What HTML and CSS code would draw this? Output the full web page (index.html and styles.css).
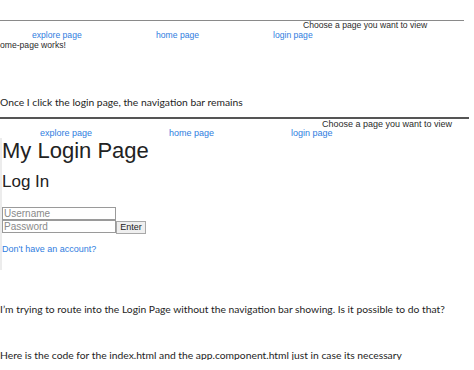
FILE: index.html
```html
<!DOCTYPE html>
<html>
  <head>
    <meta name="viewport" content="width=device-width,initial-scale=1.0" />
    <title>Login route question</title>
    <link rel="stylesheet" href="styles.css">
  </head>
  <body>
    <div class="shot shot-home">
      <div class="rule"></div>
      <div class="choose">Choose a page you want to view</div>
      <nav class="nav">
        <a class="nav-link" href="#">explore page</a>
        <a class="nav-link" href="#">home page</a>
        <a class="nav-link" href="#">login page</a>
      </nav>
      <p class="works">ome-page works!</p>
    </div>

    <p class="doc doc-once">Once I click the login page, the navigation bar remains</p>

    <div class="shot shot-login">
      <div class="rule"></div>
      <div class="choose">Choose a page you want to view</div>
      <nav class="nav">
        <a class="nav-link" href="#">explore page</a>
        <a class="nav-link" href="#">home page</a>
        <a class="nav-link" href="#">login page</a>
      </nav>
      <div class="login">
        <h1 class="login-title">My Login Page</h1>
        <h2 class="login-sub">Log In</h2>
        <form class="login-form" action="">
          <div class="row"><input class="field" placeholder="Username" /></div>
          <div class="row"><input class="field" type="password" placeholder="Password" /><button class="enter">Enter</button></div>
        </form>
        <a class="signup" href="#">Don't have an account?</a>
      </div>
    </div>

    <p class="doc doc-trying">I’m trying to route into the Login Page without the navigation bar showing. Is it possible to do that?</p>

    <p class="doc doc-here">Here is the code for the index.html and the app.component.html just in case its necessary</p>
  </body>
</html>
```

FILE: styles.css
```css
body {
  margin: 0;
  background: #fff;
  color: #222;
}

/* screenshots of the angular app */
.shot {
  font-family: "Liberation Sans", Arial, sans-serif;
  color: #2b2b2b;
}

.shot-home {
  padding-top: 20px;
  font-size: 8.6px;
}

.shot-login {
  margin-top: 10px;
  font-size: 9px;
}

.rule {
  height: 1px;
  width: 464px;
  background: #8a8a8a;
}
.shot-login .rule {
  height: 2px;
  width: 469px;
  background: #555;
}

.choose {
  line-height: 9px;
  padding-left: 303px;
}
.shot-login .choose {
  line-height: 10px;
  padding-left: 322px;
}

.nav {
  display: flex;
  line-height: 10px;
  padding-left: 32px;
}
.shot-login .nav {
  line-height: 9px;
  padding-left: 40px;
}

.nav-link {
  color: #2f7de0;
  text-decoration: none;
}
.shot-home .nav-link:nth-child(1) { width: 124px; }
.shot-home .nav-link:nth-child(2) { width: 117px; }
.shot-login .nav-link:nth-child(1) { width: 129px; }
.shot-login .nav-link:nth-child(2) { width: 122px; }

.works {
  margin: 0;
  line-height: 10px;
}

.login {
  border-left: 2px solid #ececec;
  height: 132px;
}

.login-title {
  margin: 0;
  font-size: 22px;
  font-weight: normal;
  line-height: 25px;
  color: #222;
}

.login-sub {
  margin: 9px 0 0;
  font-size: 17px;
  font-weight: normal;
  line-height: 20px;
  color: #222;
}

.login-form {
  margin: 15px 0 0;
}

.row {
  display: flex;
  align-items: flex-start;
}

.field {
  box-sizing: border-box;
  width: 114px;
  height: 13px;
  margin: 0;
  padding: 0 1px;
  border: 1px solid #9a9a9a;
  font-family: "Liberation Sans", Arial, sans-serif;
  font-size: 10px;
  outline: none;
}
.field::placeholder {
  color: #8a8a8a;
}

.enter {
  box-sizing: border-box;
  width: 30px;
  height: 13px;
  margin: 1px 0 0;
  padding: 0;
  border: 1px solid #a8a8a8;
  background: #efefef;
  font-family: "Liberation Sans", Arial, sans-serif;
  font-size: 9px;
  line-height: 11px;
  color: #222;
}

.signup {
  display: block;
  margin-top: 10px;
  line-height: 10px;
  color: #2f7de0;
  text-decoration: none;
}

/* word document text around the screenshots */
.doc {
  margin: 0;
  font-family: Lato, "Open Sans", sans-serif;
  font-size: 10.3px;
  line-height: 10px;
  color: #1e1e1e;
  white-space: nowrap;
}

.doc-once {
  margin-top: 47px;
}

.doc-trying {
  margin-top: 34px;
}

.doc-here {
  margin-top: 36px;
}
```
